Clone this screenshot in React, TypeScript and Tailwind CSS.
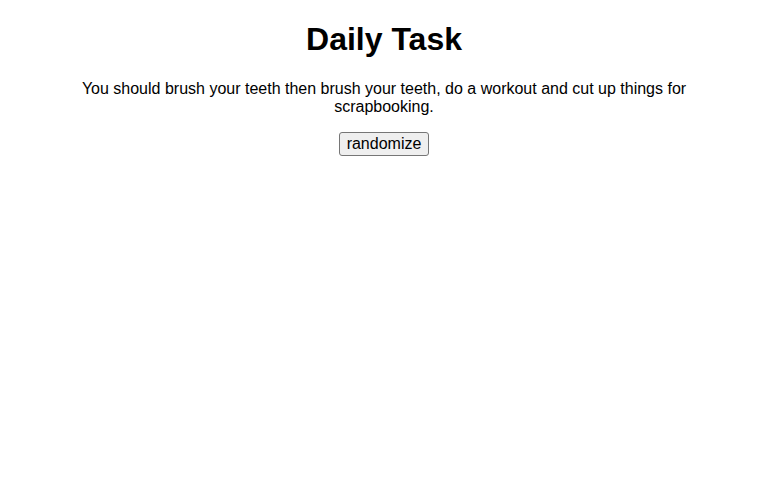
export default function App() {
  return (
    <div className="min-h-screen bg-white px-2 text-center text-black font-['Liberation_Sans',Arial,sans-serif]">
      <div className="mx-auto max-w-[640px]">
        <h1 className="pt-[21px] mb-[22px] text-[32px] leading-[37px] font-bold">Daily Task</h1>
        <p className="mb-[16px] text-base leading-[18px]">
          You should brush your teeth then brush your teeth, do a workout and cut up things for scrapbooking.
        </p>
        <button className="h-[24px] px-[7px] text-base leading-[18px] bg-[#efefef] border border-[#767676] rounded-[3px] text-black">
          randomize
        </button>
      </div>
    </div>
  );
}
